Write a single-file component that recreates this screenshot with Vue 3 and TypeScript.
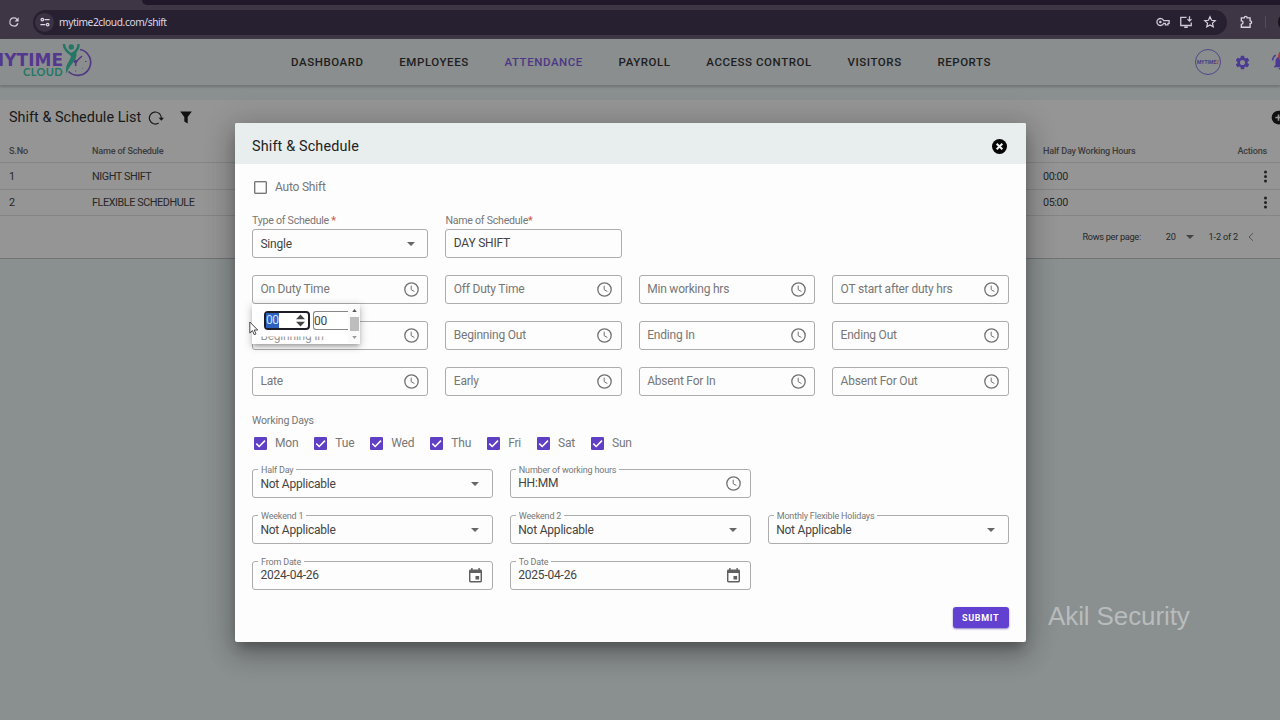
<script setup lang="ts">
interface Field { label: string; peek?: boolean }
interface Choice { label: string; value: string; icon: 'menu' | 'clock' | 'date' | 'none' }

const nav: string[] = ['DASHBOARD', 'EMPLOYEES', 'ATTENDANCE', 'PAYROLL', 'ACCESS CONTROL', 'VISITORS', 'REPORTS']
const rows = [
  { no: '1', name: 'NIGHT SHIFT', half: '00:00' },
  { no: '2', name: 'FLEXIBLE SCHEDHULE', half: '05:00' },
]
const times: Field[] = [
  { label: 'On Duty Time' }, { label: 'Off Duty Time' }, { label: 'Min working hrs' }, { label: 'OT start after duty hrs' },
  { label: 'Beginning In', peek: true }, { label: 'Beginning Out' }, { label: 'Ending In' }, { label: 'Ending Out' },
  { label: 'Late' }, { label: 'Early' }, { label: 'Absent For In' }, { label: 'Absent For Out' },
]
const days: string[] = ['Mon', 'Tue', 'Wed', 'Thu', 'Fri', 'Sat', 'Sun']
const choices: (Choice | null)[] = [
  { label: 'Half Day', value: 'Not Applicable', icon: 'menu' },
  { label: 'Number of working hours', value: 'HH:MM', icon: 'clock' },
  null,
  { label: 'Weekend 1', value: 'Not Applicable', icon: 'menu' },
  { label: 'Weekend 2', value: 'Not Applicable', icon: 'menu' },
  { label: 'Monthly Flexible Holidays', value: 'Not Applicable', icon: 'menu' },
  { label: 'From Date', value: '2024-04-26', icon: 'date' },
  { label: 'To Date', value: '2025-04-26', icon: 'date' },
]
</script>

<template>
  <div class="screen">
    <div class="tabs"><div class="tab-active"></div><div class="tab-rest"></div></div>
    <div class="toolbar">
      <svg class="reload" viewBox="0 0 24 24"><path d="M17.65 6.35A7.96 7.96 0 0 0 12 4a8 8 0 1 0 7.73 10h-2.4A5.9 5.9 0 1 1 12 6.1c1.66 0 3.1.7 4.2 1.75L13 11h7V4z" /></svg>
      <div class="url">
        <span class="tune"><svg viewBox="0 0 12 12"><g fill="none" stroke="#ded8e4" stroke-width="1.5"><circle cx="2.8" cy="3" r="1.5" /><path d="M5.5 3H11.5M.5 9H6.5" /><circle cx="9.2" cy="9" r="1.5" /></g></svg></span>
        <span class="address">mytime2cloud.com/shift</span>
        <svg class="u-icon key" viewBox="0 0 24 24"><path fill="none" stroke="#cfc8d5" stroke-width="2.2" d="M13 9.5A6 6 0 1 0 13 14.500H16V17H20.500V14.500H22.500V9.500Z" /><circle cx="7.500" cy="12" r="2.200" fill="#cfc8d5" /></svg>
        <svg class="u-icon" viewBox="0 0 24 24"><path fill="none" stroke="#cfc8d5" stroke-width="2.2" d="M13 4H3V18H21V13M9 21H15M18 2V10M14.500 7L18 10.500L21.500 7" /></svg>
        <svg class="u-icon star" viewBox="0 0 24 24"><path fill="none" stroke="#d9d2df" stroke-width="2" d="M12 3L14.700 9L21 9.700L16.200 14L17.600 20.300L12 17L6.400 20.300L7.800 14L3 9.700L9.300 9Z" /></svg>
      </div>
      <svg class="puzzle" viewBox="0 0 24 24"><path fill="none" stroke="#d9d2df" stroke-width="2.300" d="M4 5H9C9 1.500 14 1.500 14 5H19V10C22.500 10 22.500 15 19 15V21H4V16C8 16 8 10 4 10Z" /></svg>
      <i class="bar"></i><i class="profile"></i>
    </div>

    <header class="appbar">
      <div class="logo">
        <div class="words"><b>MYTIME</b><em>CLOUD</em></div>
        <svg class="mark" viewBox="0 0 30 36">
          <path d="M18 7.500A13 13 0 1 1 6.500 29.500" fill="none" stroke="#523a83" stroke-width="1.700" />
          <path d="M2 2C2 9 7 10 9.500 13C12 10 17 9 16.500 2" fill="none" stroke="#237764" stroke-width="2.400" />
          <path d="M9 11C11 18 1 22 5 32C5 24 17 19 14 9Z" fill="#237764" />
          <circle cx="9.300" cy="5" r="2.700" fill="#237764" />
          <path d="M20 14L13.700 20V24" fill="none" stroke="#523a83" stroke-width="1.600" /><circle cx="13.700" cy="19.500" r="1.800" fill="#523a83" />
          <path d="M13.700 28.500V29.500M23 19.500H24.500M20 26L20.500 26.500" stroke="#523a83" />
        </svg>
      </div>
      <nav><a v-for="n in nav" :key="n" :class="{ on: n === 'ATTENDANCE' }">{{ n }}</a></nav>
      <div class="account"><span>MYTIME<i>2</i></span></div>
      <svg class="gear" viewBox="0 0 24 24"><path fill="#4b3a93" d="M19.140 12.940c.040-.300.060-.610.060-.940s-.020-.640-.070-.940l2.030-1.580a.49.49 0 0 0 .120-.610l-1.920-3.320a.49.49 0 0 0-.590-.220l-2.390.960a7 7 0 0 0-1.620-.940l-.360-2.540a.48.48 0 0 0-.480-.410h-3.840a.47.470 0 0 0-.470.410l-.360 2.540c-.590.240-1.130.570-1.620.940l-2.390-.960a.48.48 0 0 0-.590.220L2.740 8.870a.47.47 0 0 0 .120.610l2.030 1.580c-.050.300-.090.630-.090.940s.020.640.070.940l-2.030 1.580a.49.49 0 0 0-.120.610l1.920 3.320c.120.220.370.290.590.220l2.390-.960c.500.380 1.030.700 1.620.940l.360 2.540c.050.240.240.410.480.410h3.840c.240 0 .440-.170.470-.410l.360-2.540a7 7 0 0 0 1.620-.940l2.390.960c.220.080.470 0 .590-.220l1.920-3.320a.47.47 0 0 0-.120-.610zM12 15.600a3.600 3.600 0 1 1 0-7.200 3.600 3.600 0 0 1 0 7.200" /></svg>
      <div class="bell"><svg viewBox="0 0 24 24"><path fill="#4b3a93" d="M12 22a2 2 0 0 0 2-2h-4a2 2 0 0 0 2 2m6-6v-5c0-3-2-5.600-4.500-6.300V4a1.500 1.500 0 0 0-3 0v.700C8 5.400 6 8 6 11v5l-2 2v1h16v-1zM3 10H1c.200-3.400 2-6.300 4.700-8L7 3.500C4.700 5 3.200 7.300 3 10" /></svg><i></i></div>
    </header>

    <main class="list">
      <div class="list-head">
        <h1>Shift &amp; Schedule List</h1>
        <svg class="refresh" viewBox="0 0 24 24"><path fill="none" stroke="#161616" stroke-width="1.800" d="M16 19.500A9 9 0 1 1 20 12" /><path fill="#161616" d="M16 11.500H24L20 16Z" /></svg>
        <svg class="filter" viewBox="0 0 12 13"><path fill="#111" d="M.200.500H11.800L7.700 6V12.500L4.300 10.500V6Z" /></svg>
        <svg class="add" viewBox="0 0 24 24"><circle cx="12" cy="12" r="11" fill="#111" /><path d="M12 7V17M7 12H17" stroke="#999" stroke-width="2.500" /></svg>
      </div>
      <div class="tr th"><span>S.No</span><span>Name of Schedule</span><span>Half Day Working Hours</span><span class="end">Actions</span></div>
      <div v-for="r in rows" :key="r.no" class="tr"><span>{{ r.no }}</span><span>{{ r.name }}</span><span>{{ r.half }}</span><span class="end"><i class="dots"></i></span></div>
      <div class="pager"><span class="rpp">Rows per page:</span><span class="twenty">20</span><i class="caret"></i><span class="range">1-2 of 2</span><svg viewBox="0 0 6 10"><path d="M5 1.200L1 5L5 8.800" fill="none" stroke="#555" stroke-width="1" /></svg></div>
    </main>

    <div class="watermark">Akil Security</div>

    <section class="modal">
      <div class="modal-head"><h2>Shift &amp; Schedule</h2><svg viewBox="0 0 24 24"><circle cx="12" cy="12" r="12" fill="#060606" /><path d="M7.500 7.500L16.500 16.500M16.500 7.500L7.500 16.500" stroke="#f2f5f5" stroke-width="3.200" /></svg></div>
      <div class="modal-body">
        <div class="auto"><i class="box"></i><span>Auto Shift</span></div>
        <div class="grid4 first">
          <div><label>Type of Schedule <b>*</b></label><div class="field"><span class="dark">Single</span><i class="caret"></i></div></div>
          <div><label>Name of Schedule<b>*</b></label><div class="field"><span class="dark high">DAY SHIFT</span></div></div>
        </div>
        <div class="grid4 times">
          <div v-for="t in times" :key="t.label" class="field">
            <span :class="t.peek ? 'peek' : 'high'">{{ t.label }}</span>
            <svg class="clock" viewBox="0 0 15 15"><g fill="none" stroke="#707070"><circle cx="7.500" cy="7.500" r="6.700" stroke-width="1.300" /><path stroke-width="1" d="M7.200 3.700V7.700L10.400 9.500" /></g></svg>
          </div>
          <div class="popover">
            <div class="spin active"><mark>00</mark><svg viewBox="0 0 9 13"><path fill="#444" d="M0 5.300L4.500 .500L9 5.300ZM0 7.700H9L4.500 12.500Z" /></svg></div>
            <div class="spin second">00</div>
            <div class="scroll"><svg viewBox="0 0 6 4"><path d="M0 4L3 0L6 4Z" fill="#555" /></svg><i></i><svg viewBox="0 0 6 4"><path d="M0 0H6L3 4Z" fill="#999" /></svg></div>
          </div>
        </div>
        <div class="wd">Working Days</div>
        <div class="days"><span v-for="d in days" :key="d" class="day"><svg viewBox="0 0 13 13"><rect width="13" height="13" rx="1.300" fill="#5f40c4" /><path d="M2.300 6.600L5.200 9.500L11 3.600" fill="none" stroke="#fff" stroke-width="1.500" /></svg>{{ d }}</span></div>
        <div class="grid3">
          <template v-for="(c, i) in choices" :key="i">
            <div v-if="c" class="field">
              <small>{{ c.label }}</small><span class="dark" :class="{ high: c.icon !== 'menu' }">{{ c.value }}</span>
              <i v-if="c.icon === 'menu'" class="caret"></i>
              <svg v-else-if="c.icon === 'clock'" class="clock" viewBox="0 0 15 15"><g fill="none" stroke="#707070"><circle cx="7.500" cy="7.500" r="6.700" stroke-width="1.300" /><path stroke-width="1" d="M7.200 3.700V7.700L10.400 9.500" /></g></svg>
              <svg v-else class="date" viewBox="0 0 18 20"><path fill="#606060" d="M14 11H9v5h5zM13 0v2H5V0H3v2H2a2 2 0 0 0-2 2v14a2 2 0 0 0 2 2h14a2 2 0 0 0 2-2V4a2 2 0 0 0-2-2h-1V0zm3 18H2V7h14z" /></svg>
            </div>
            <div v-else></div>
          </template>
        </div>
        <div class="actions"><button>SUBMIT</button></div>
      </div>
    </section>
    <svg class="cursor" viewBox="0 0 10 15"><path d="M.800 1V12L3.400 9.600L5.200 13.700L7 12.900L5.200 9H8.700Z" fill="#fff" stroke="#333" stroke-width=".900" /></svg>
  </div>
</template>

<style>
body { margin: 0; overflow: hidden; }
</style>

<style scoped>
* { box-sizing: border-box; }
.screen { position: relative; width: 1280px; height: 720px; overflow: hidden; background: #8a8f90; font-family: Roboto, "Liberation Sans", sans-serif; color: #272727; font-size: 12px; }
svg { display: block; flex: none; }
h1, h2 { margin: 0; font-weight: 400; }
.tabs { height: 5px; display: flex; background: #3e3644; }
.tab-active { width: 142px; background: #3e3644; }
.tab-rest { flex: 1; background: #211929; border-bottom-left-radius: 5px; }
.toolbar { height: 34px; display: flex; align-items: center; background: #3e3644; }
.reload { width: 14px; height: 14px; margin-left: 7px; fill: #d5ced9; }
.url { flex: none; margin-left: 12px; width: 1194px; height: 25px; border-radius: 13px; background: #272031; display: flex; align-items: center; padding-left: 2px; padding-right: 10px; }
.tune { width: 19px; height: 19px; border-radius: 50%; background: #3b3344; display: flex; align-items: center; justify-content: center; }
.tune svg { width: 10px; height: 10px; }
.address { margin-left: 5px; flex: 1; font: 10.200px/16px "Noto Sans", sans-serif; color: #ddd8e1; letter-spacing: -.400px; }
.u-icon { width: 14px; height: 14px; margin-left: 9px; }
.star { margin-left: 10px; }
.puzzle { width: 14px; height: 14px; margin-left: 12px; }
.bar { flex: none; width: 1px; height: 12px; margin-left: 12px; background: #554b5b; }
.profile { width: 18px; height: 18px; flex: none; border-radius: 50%; margin-left: 12px; background: #171319; }
.appbar { height: 47px; display: flex; align-items: center; position: relative; background: #8a8e8f; border-bottom: 1px solid #747879; box-shadow: 0 1px 2px #6e7374; }
.logo { flex: none; width: 291px; height: 47px; display: flex; }
.words { width: 63px; display: flex; flex-direction: column; align-items: flex-end; padding-top: 14px; white-space: nowrap; }
.words b { font: 700 17px/14px "DejaVu Sans", sans-serif; color: #54378f; letter-spacing: 0; }
.words em { font: 700 11px/10px Lato, sans-serif; color: #237764; letter-spacing: .35px; }
.mark { width: 30px; height: 36px; margin: 3px 0 0 -1px; }
nav { flex: none; display: flex; width: 904px; gap: 35.700px; font-weight: 500; font-size: 11.500px; letter-spacing: .56px; color: #1d2020; line-height: 16px; }
nav a { white-space: nowrap; }
nav .on { color: #4d3884; }
.account { flex: none; width: 26px; height: 26px; border: 1px solid #514787; border-radius: 50%; display: flex; align-items: center; justify-content: center; font-weight: 700; font-size: 5px; color: #4b3b82; }
.account i { color: #9e5547; }
.gear { width: 17px; height: 17px; margin-left: 12.500px; }
.bell { position: relative; margin-left: 20px; flex: none; }
.bell svg { width: 18px; height: 18px; }
.bell i { position: absolute; left: 7px; top: -3px; width: 12px; height: 12px; border-radius: 50%; background: #a43e42; }
.list { margin-top: 14px; height: 159px; background: #959595; border-bottom: 1px solid #6f7374; }
.list-head { height: 38px; display: flex; align-items: center; padding: 0 0 3px 9px; }
.list-head h1 { flex: none; font-size: 14.400px; line-height: 20px; color: #181818; width: 138px; white-space: nowrap; letter-spacing: .03px; }
.refresh { width: 16px; height: 16px; margin-left: 1px; }
.filter { width: 12px; height: 13px; margin-left: 16px; }
.add { width: 15px; height: 15px; margin-left: 1079px; }
.tr { height: 26.500px; display: grid; grid-template-columns: 83px 951px 120px 1fr; align-items: center; padding: 1px 13px 0 9px; border-bottom: 1px solid #858585; font-size: 10.800px; white-space: nowrap; letter-spacing: -.42px; }
.th { height: 25px; padding-top: 2px; font-size: 9.100px; font-weight: 500; color: #3c3c3c; letter-spacing: -.200px; }
.end { justify-self: end; }
.dots { display: block; width: 3px; height: 3px; border-radius: 50%; background: #222; box-shadow: 0 -4.500px #222, 0 4.500px #222; }
.pager { height: 41px; display: flex; align-items: center; justify-content: flex-end; padding-right: 26px; font-size: 9.200px; letter-spacing: -.3px; }
.twenty { margin-left: 25px; }
.range { margin-left: 15px; margin-right: 10px; letter-spacing: -.2px; }
.pager svg { width: 6px; height: 10px; }
.caret { display: block; border: 4px solid transparent; border-top-color: #666; border-bottom: 0; }
.pager .caret { margin-left: 10px; border-top-color: #444; }
.watermark { position: absolute; left: 1048px; top: 600px; font: 26px/32px "Liberation Sans", sans-serif; color: #b8bcbd; letter-spacing: -.1px; white-space: nowrap; }
.modal { position: absolute; left: 235px; top: 123px; width: 791px; height: 519px; background: #fdfdfd; border-radius: 2px; box-shadow: 0 8px 11px -3px rgba(0,0,0,.25), 0 14px 27px 2px rgba(0,0,0,.16), 0 3px 30px 5px rgba(0,0,0,.14); }
.modal-head { height: 41px; background: #e8edee; border-radius: 2px 2px 0 0; display: flex; align-items: center; justify-content: space-between; padding: 5px 19px 0 17px; }
.modal-head h2 { font-size: 14.400px; line-height: 20px; color: #222; letter-spacing: .15px; padding-top: 1px; }
.modal-head svg { width: 15px; height: 15px; }
.modal-body { padding: 15px 17.400px 0 17px; color: #777; letter-spacing: -.210px; }
.auto { height: 16px; display: flex; align-items: center; gap: 8px; padding-left: 2px; line-height: 16px; }
.box { width: 13px; height: 13px; border: 1.300px solid #777; border-radius: 1px; box-shadow: inset 0 0 0 .500px #999; }
.grid4 { display: grid; grid-template-columns: repeat(4, 1fr); column-gap: 17px; }
.first { margin-top: 19px; }
label { display: block; font-size: 10.600px; line-height: 13px; height: 15px; letter-spacing: -.240px; }
label b { color: #d75b42; font-weight: 500; }
.field { height: 29px; border: 1px solid #acacac; border-radius: 3px; display: flex; align-items: center; justify-content: space-between; padding: 0 9.700px 0 7.400px; position: relative; line-height: 16px; white-space: nowrap; }
.dark { color: #444; }
.high { margin-top: -1px; }
.field .caret { margin-right: 3px; }
.clock { width: 15px; height: 15px; margin-right: -1px; }
.times { margin-top: 17px; row-gap: 17px; position: relative; }
.peek { position: relative; z-index: 3; clip-path: inset(9px 0 0 0); opacity: .75; }
.popover { position: absolute; z-index: 2; left: 0; top: 29px; width: 108px; height: 40px; background: #fff; display: flex; padding: 7px 0 0 12px; overflow: hidden; box-shadow: 0 3px 4px -1px rgba(0,0,0,.25), 0 2px 8px 1px rgba(0,0,0,.18); }
.spin { height: 19px; border: 1px solid #888; border-radius: 3px; color: #444; display: flex; align-items: center; flex: none; }
.active { width: 46px; border: 2px solid #1d1d25; border-radius: 4px; justify-content: space-between; padding: 0 3px 0 0; }
mark { background: #2c62bd; color: #cfe2ff; height: 15px; line-height: 15px; width: 13px; letter-spacing: -.600px; }
.active svg { width: 9px; height: 13px; }
.second { width: 35px; margin-left: 3px; border-right: 0; border-radius: 3px 0 0 3px; }
.scroll { width: 12px; height: 38px; margin-top: -6px; display: flex; flex-direction: column; align-items: center; justify-content: space-between; background: #fafafa; padding: 4px 0; }
.scroll svg { width: 5px; height: 3px; }
.scroll i { width: 9px; height: 14px; background: #bdbdbd; }
.wd { margin-top: 18px; font-size: 10.600px; line-height: 13px; }
.days { display: flex; height: 16px; margin-top: 8px; padding-left: 2px; line-height: 16px; letter-spacing: -.2px; }
.day { display: flex; align-items: center; margin-right: 16px; }
.day svg { width: 13px; height: 13px; margin-right: 8px; }
.grid3 { display: grid; grid-template-columns: repeat(3, 1fr); gap: 17px; margin-top: 18px; }
small { position: absolute; left: 5px; top: -5.500px; padding: 0 3px; background: #fdfdfd; font-size: 9px; line-height: 11px; letter-spacing: -.180px; }
.date { width: 13px; height: 14.500px; }
.actions { display: flex; justify-content: flex-end; margin-top: 17px; }
button { width: 56px; height: 21px; border: 0; border-radius: 3px; background: #6241d0; color: #fff; font: 700 9px/20px Roboto, sans-serif; letter-spacing: .65px; padding: 0; box-shadow: 0 1px 2px rgba(50,20,150,.55); }
.cursor { position: absolute; left: 249px; top: 321px; width: 10px; height: 15px; z-index: 5; }
</style>
